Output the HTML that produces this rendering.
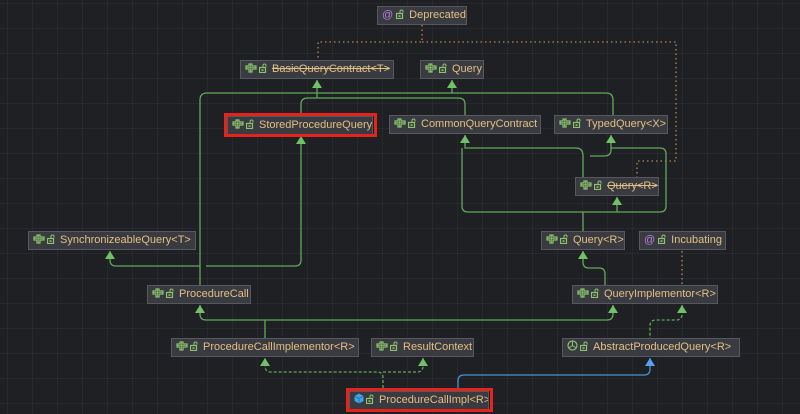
<!DOCTYPE html>
<html><head><meta charset="utf-8"><style>
html,body{margin:0;padding:0}
body{width:800px;height:414px;overflow:hidden;position:relative;background:#1f2024;
background-image:linear-gradient(rgba(255,255,255,0.035) 1px,transparent 1px),linear-gradient(90deg,rgba(255,255,255,0.035) 1px,transparent 1px);
background-size:25px 25px;background-position:7px 3px;font-family:"Liberation Sans",sans-serif}
.n{position:absolute;height:19px;background:#393b40;border:1px solid #55585e;box-sizing:border-box;color:#e3bf84;font-size:11px;line-height:17px;white-space:nowrap;padding-left:4px;overflow:hidden}
.n svg{position:static;display:inline-block;vertical-align:-1px}
.n .ic{margin-right:2px}
.n .lk{margin-right:5px}
.at{color:#b77ee0;font-size:11px;margin-right:3px}
.s{text-decoration:line-through}
.red{position:absolute;border:3px solid #e5231c;box-sizing:border-box}
svg.bg{position:absolute;left:0;top:0}
</style></head><body>
<svg class="bg" width="800" height="414" viewBox="0 0 800 414" fill="none">
<g stroke="#b08a55" stroke-width="1.3" stroke-dasharray="1.5 3">
<path d="M422 25V42H318V60"/>
<path d="M422 42H676V161H637V177"/>
<path d="M682 251V285"/>
</g>
<g stroke="#62a85a" stroke-width="1.3">
<path d="M200 285V100Q200 93 207 93H606Q613 93 613 100V115"/>
<path d="M452 93V80"/>
<path d="M301 113V104Q301 98 308 98H458Q465 98 465 104V115"/>
<path d="M317 98V80"/>
<path d="M301 136V260Q301 266 295 266H206"/>
<path d="M200 266H116Q110 266 110 260V251"/>
<path d="M465 135V148H576Q583 148 583 156V177"/>
<path d="M611 135V150Q611 156 604 156H590"/>
<path d="M611 148H660Q666 148 666 154V206Q666 212 660 212H468Q462 212 462 206V148"/>
<path d="M583 212V231"/>
<path d="M617 197V212"/>
<path d="M583 251V262Q583 268 589 268H599Q605 268 605 274V285"/>
<path d="M200 305V314Q200 320 206 320H607Q613 320 613 314V305"/>
<path d="M265 320V338"/>
</g>
<g stroke="#62a85a" stroke-width="1.3" stroke-dasharray="3 2">
<path d="M682 305V314Q682 320 676 320H656Q650 320 650 326V338"/>
<path d="M383 388V378Q383 372 377 372H271Q265 372 265 366V358"/>
<path d="M383 372H417Q423 372 423 366V358"/>
</g>
<path d="M458 388V381Q458 375 464 375H644Q650 375 650 369V358" stroke="#4a8fd6" stroke-width="1.3"/>
<g fill="#6fc267">
<path d="M317 80l-5 8h10z"/><path d="M452 80l-5 8h10z"/><path d="M301 136l-5 8h10z"/>
<path d="M465 135l-5 8h10z"/><path d="M611 135l-5 8h10z"/><path d="M617 197l-5 8h10z"/>
<path d="M110 251l-5 8h10z"/><path d="M583 251l-5 8h10z"/><path d="M200 305l-5 8h10z"/>
<path d="M613 305l-5 8h10z"/><path d="M682 305l-5 8h10z"/><path d="M265 358l-5 8h10z"/>
<path d="M423 358l-5 8h10z"/>
</g>
<path d="M650 358l-5 8h10z" fill="#56a3ef"/>
</svg>

<svg width="0" height="0" style="position:absolute"><defs>
<symbol id="I" viewBox="0 0 12 10"><path d="M4 1h3v2h4v3h-4v3h-3v-3h-3v-3h3z" fill="none" stroke="#8bc46d" stroke-width="1.2"/><path d="M1 4.5h10M5.5 1v8" stroke="#8bc46d" stroke-width="0.8"/></symbol>
<symbol id="L" viewBox="0 0 8 10"><path d="M4 4V2.5Q4 1 5.5 1T7 2.5V3.5" fill="none" stroke="#8bc46d" stroke-width="1"/><rect x="0.5" y="4.5" width="6" height="5" fill="none" stroke="#8bc46d" stroke-width="1.2"/><rect x="2.5" y="6.3" width="2" height="1.6" fill="#8bc46d"/></symbol>
</defs></svg>

<div class="n" style="left:377px;top:6px;width:90px"><span class="at">@</span><svg class="lk" width="8" height="10"><use href="#L"/></svg>Deprecated</div>
<div class="n" style="left:240px;top:60px;width:154px"><svg class="ic" width="12" height="10"><use href="#I"/></svg><svg class="lk" width="8" height="10"><use href="#L"/></svg><span class="s">BasicQueryContract&lt;T&gt;</span></div>
<div class="n" style="left:420px;top:60px;width:64px"><svg class="ic" width="12" height="10"><use href="#I"/></svg><svg class="lk" width="8" height="10"><use href="#L"/></svg>Query</div>
<div class="n" style="left:227px;top:116px;width:146px"><svg class="ic" width="12" height="10"><use href="#I"/></svg><svg class="lk" width="8" height="10"><use href="#L"/></svg>StoredProcedureQuery</div>
<div class="red" style="left:224px;top:113px;width:153px;height:24px"></div>
<div class="n" style="left:389px;top:115px;width:152px"><svg class="ic" width="12" height="10"><use href="#I"/></svg><svg class="lk" width="8" height="10"><use href="#L"/></svg>CommonQueryContract</div>
<div class="n" style="left:554px;top:115px;width:114px"><svg class="ic" width="12" height="10"><use href="#I"/></svg><svg class="lk" width="8" height="10"><use href="#L"/></svg>TypedQuery&lt;X&gt;</div>
<div class="n" style="left:575px;top:177px;width:84px"><svg class="ic" width="12" height="10"><use href="#I"/></svg><svg class="lk" width="8" height="10"><use href="#L"/></svg><span class="s">Query&lt;R&gt;</span></div>
<div class="n" style="left:28px;top:231px;width:168px"><svg class="ic" width="12" height="10"><use href="#I"/></svg><svg class="lk" width="8" height="10"><use href="#L"/></svg>SynchronizeableQuery&lt;T&gt;</div>
<div class="n" style="left:541px;top:231px;width:84px"><svg class="ic" width="12" height="10"><use href="#I"/></svg><svg class="lk" width="8" height="10"><use href="#L"/></svg>Query&lt;R&gt;</div>
<div class="n" style="left:639px;top:231px;width:87px"><span class="at">@</span><svg class="lk" width="8" height="10"><use href="#L"/></svg>Incubating</div>
<div class="n" style="left:147px;top:285px;width:104px"><svg class="ic" width="12" height="10"><use href="#I"/></svg><svg class="lk" width="8" height="10"><use href="#L"/></svg>ProcedureCall</div>
<div class="n" style="left:572px;top:285px;width:146px"><svg class="ic" width="12" height="10"><use href="#I"/></svg><svg class="lk" width="8" height="10"><use href="#L"/></svg>QueryImplementor&lt;R&gt;</div>
<div class="n" style="left:171px;top:338px;width:188px"><svg class="ic" width="12" height="10"><use href="#I"/></svg><svg class="lk" width="8" height="10"><use href="#L"/></svg>ProcedureCallImplementor&lt;R&gt;</div>
<div class="n" style="left:371px;top:338px;width:103px"><svg class="ic" width="12" height="10"><use href="#I"/></svg><svg class="lk" width="8" height="10"><use href="#L"/></svg>ResultContext</div>
<div class="n" style="left:562px;top:338px;width:178px"><svg class="ic" width="11" height="11" viewBox="0 0 11 11"><circle cx="5.5" cy="5.5" r="4.5" fill="none" stroke="#8bc46d" stroke-width="1.2"/><path d="M5.5 5.5V1M5.5 5.5L2 8M5.5 5.5L9 8" stroke="#8bc46d" stroke-width="1"/></svg><svg class="lk" width="8" height="10"><use href="#L"/></svg>AbstractProducedQuery&lt;R&gt;</div>
<div class="n" style="left:349px;top:391px;width:140px"><svg class="ic" width="10" height="11" viewBox="0 0 10 11"><path d="M5 0.5L9.5 3V8L5 10.5L0.5 8V3z" fill="#3fa3e8"/><path d="M0.5 3L5 5.5L9.5 3M5 5.5V10.5" stroke="#1f6fa8" stroke-width="0.8" fill="none"/></svg><svg class="lk" width="8" height="10"><use href="#L"/></svg>ProcedureCallImpl&lt;R&gt;</div>
<div class="red" style="left:346px;top:388px;width:147px;height:24px"></div>
</body></html>
